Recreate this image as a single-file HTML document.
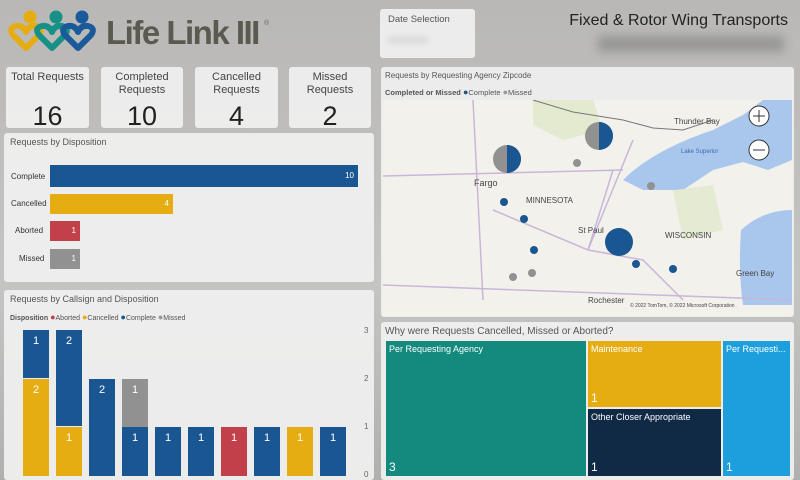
<!DOCTYPE html><html><head><style>
*{margin:0;padding:0;box-sizing:border-box}
body{width:800px;height:480px;overflow:hidden;background:linear-gradient(#b9b8b6,#c4c4c2 60%,#b0b0ae);font-family:"Liberation Sans",sans-serif;position:relative}
.a{position:absolute}
.p{position:absolute;background:rgba(240,240,240,.93);border-radius:3px}
.k{text-align:center;color:#444;font-size:11px;line-height:13px;padding-top:4px}
.k b{font-weight:normal;display:block;font-size:27px;color:#222;position:absolute;left:0;right:0;bottom:5px}
.t{font-size:9px;color:#555}
.bar{position:absolute;color:#fff;font-size:11px;text-align:center}
.lbl{position:absolute;font-size:8px;color:#333}
.tile{position:absolute;color:#fff;font-size:9px;padding:3px}
.tile b{position:absolute;left:3px;bottom:2px;font-size:12px;font-weight:normal}
</style></head><body>
<svg class="a" style="left:6px;top:8px" width="96" height="46" viewBox="0 0 96 46">
<g fill="none" stroke-width="6" stroke-linejoin="round">
<path d="M20 40 L7 27 Q2 20 10 18 Q17 17 20 24 Q23 17 30 18 Q38 20 33 27 Z" stroke="#e6ad13"/>
<path d="M46 40 L33 27 Q28 20 36 18 Q43 17 46 24 Q49 17 56 18 Q64 20 59 27 Z" stroke="#179087"/>
<path d="M72 40 L59 27 Q54 20 62 18 Q69 17 72 24 Q75 17 82 18 Q90 20 85 27 Z" stroke="#1a5a9a"/>
</g>
<circle cx="24" cy="9" r="6.5" fill="#e6ad13"/><circle cx="50" cy="9" r="6.5" fill="#179087"/><circle cx="76" cy="9" r="6.5" fill="#1a5a9a"/>
</svg>
<div class="a" style="left:106px;top:14px;font-size:33px;font-weight:bold;color:#5a5a50;letter-spacing:-1.5px">Life Link III</div>
<div class="a" style="left:264px;top:20px;font-size:7px;color:#666">®</div>
<div class="p" style="left:380px;top:9px;width:95px;height:49px"><div class="t" style="padding:5px 8px;font-size:9.5px">Date Selection</div><div style="margin:6px 8px;height:8px;width:40px;background:#ddd;filter:blur(2px)"></div></div>
<div class="a" style="right:12px;top:12px;font-size:16px;color:#222">Fixed &amp; Rotor Wing Transports</div>
<div class="a" style="left:598px;top:36px;width:186px;height:16px;background:#8e8e8c;filter:blur(5px);opacity:.8"></div>
<div class="p k" style="left:6px;top:67px;width:83px;height:61px">Total Requests<b>16</b></div>
<div class="p k" style="left:101px;top:67px;width:82px;height:61px">Completed<br>Requests<b>10</b></div>
<div class="p k" style="left:195px;top:67px;width:83px;height:61px">Cancelled<br>Requests<b>4</b></div>
<div class="p k" style="left:289px;top:67px;width:82px;height:61px">Missed Requests<b>2</b></div>
<div class="p" style="left:4px;top:133px;width:370px;height:149px">
<div class="t" style="position:absolute;left:6px;top:4px">Requests by Disposition</div>
<div class="lbl" style="left:7px;top:39px">Complete</div><div class="bar" style="left:46px;top:32px;width:308px;height:22px;background:#1a5691;font-size:8px;text-align:right;padding:6px 4px 0">10</div>
<div class="lbl" style="left:7px;top:66px">Cancelled</div><div class="bar" style="left:46px;top:61px;width:123px;height:20px;background:#e6ad13;font-size:8px;text-align:right;padding:5px 4px 0">4</div>
<div class="lbl" style="left:11px;top:93px">Aborted</div><div class="bar" style="left:46px;top:88px;width:30px;height:20px;background:#c2404a;font-size:8px;text-align:right;padding:5px 4px 0">1</div>
<div class="lbl" style="left:15px;top:121px">Missed</div><div class="bar" style="left:46px;top:116px;width:30px;height:20px;background:#919191;font-size:8px;text-align:right;padding:5px 4px 0">1</div>
</div>
<div class="p" style="left:4px;top:290px;width:370px;height:190px">
<div class="t" style="position:absolute;left:6px;top:4px">Requests by Callsign and Disposition</div>
<div style="position:absolute;left:6px;top:22px;font-size:7px;color:#555"><b>Disposition</b> <span style="color:#c2404a;font-size:9px">●</span>Aborted <span style="color:#e6ad13;font-size:9px">●</span>Cancelled <span style="color:#1a5691;font-size:9px">●</span>Complete <span style="color:#999;font-size:9px">●</span>Missed</div>
<div class="lbl" style="left:360px;top:36px;color:#666">3</div><div class="lbl" style="left:360px;top:84px;color:#666">2</div><div class="lbl" style="left:360px;top:132px;color:#666">1</div><div class="lbl" style="left:360px;top:180px;color:#666">0</div>
</div>
<div class="bar" style="left:23px;top:330px;width:26px;height:48px;background:#1a5691;padding-top:5px">1</div>
<div class="bar" style="left:23px;top:379px;width:26px;height:97px;background:#e6ad13;padding-top:5px">2</div>
<div class="bar" style="left:56px;top:330px;width:26px;height:96px;background:#1a5691;padding-top:5px">2</div>
<div class="bar" style="left:56px;top:427px;width:26px;height:49px;background:#e6ad13;padding-top:5px">1</div>
<div class="bar" style="left:89px;top:379px;width:26px;height:97px;background:#1a5691;padding-top:5px">2</div>
<div class="bar" style="left:122px;top:379px;width:26px;height:48px;background:#919191;padding-top:5px">1</div>
<div class="bar" style="left:122px;top:427px;width:26px;height:49px;background:#1a5691;padding-top:5px">1</div>
<div class="bar" style="left:155px;top:427px;width:26px;height:49px;background:#1a5691;padding-top:5px">1</div>
<div class="bar" style="left:188px;top:427px;width:26px;height:49px;background:#1a5691;padding-top:5px">1</div>
<div class="bar" style="left:221px;top:427px;width:26px;height:49px;background:#c2404a;padding-top:5px">1</div>
<div class="bar" style="left:254px;top:427px;width:26px;height:49px;background:#1a5691;padding-top:5px">1</div>
<div class="bar" style="left:287px;top:427px;width:26px;height:49px;background:#e6ad13;padding-top:5px">1</div>
<div class="bar" style="left:320px;top:427px;width:26px;height:49px;background:#1a5691;padding-top:5px">1</div>
<div class="p" style="left:381px;top:67px;width:413px;height:250px">
<div class="t" style="position:absolute;left:4px;top:4px;font-size:8px">Requests by Requesting Agency Zipcode</div>
<div style="position:absolute;left:4px;top:20px;font-size:7.5px;color:#555"><b>Completed or Missed</b> <span style="color:#1a5691;font-size:9px">●</span>Complete <span style="color:#999;font-size:9px">●</span>Missed</div>
<svg style="position:absolute;left:2px;top:33px" width="409" height="216" viewBox="0 0 409 216">
<rect width="409" height="216" fill="#f2f1ec"/>
<path d="M240 80 Q270 50 330 30 L360 15 L380 0 L409 0 L409 60 L385 70 L360 62 L330 70 L300 90 L260 90 Z" fill="#a9c6ec"/>
<path d="M358 130 Q380 110 409 110 L409 205 L360 205 Q355 170 358 130Z" fill="#a9c6ec"/>
<path d="M150 0 L210 0 L220 30 L180 40 L150 25Z" fill="#dfe8c8" opacity=".8"/>
<path d="M290 90 L330 85 L340 130 L300 140Z" fill="#dfe8c8" opacity=".7"/>
<path d="M0 76 L240 70 M90 0 L100 200 M110 110 L205 150 L260 160 L300 200 M205 150 L230 70 M205 150 L250 40 M0 185 L409 200" stroke="#c9b6d8" stroke-width="1.5" fill="none"/>
<path d="M150 0 L190 12 L240 20 L270 28 L300 30 L330 20" stroke="#777" fill="none"/>
<text x="91" y="86" font-size="9" fill="#444">Fargo</text>
<text x="143" y="103" font-size="8" fill="#444">MINNESOTA</text>
<text x="195" y="133" font-size="8" fill="#444">St Paul</text>
<text x="282" y="138" font-size="8" fill="#444">WISCONSIN</text>
<text x="291" y="24" font-size="8" fill="#444">Thunder Bay</text>
<text x="298" y="53" font-size="6" fill="#3a6ab4">Lake Superior</text>
<text x="353" y="176" font-size="8" fill="#444">Green Bay</text>
<text x="205" y="203" font-size="8" fill="#444">Rochester</text>
<text x="247" y="207" font-size="5" fill="#444">© 2022 TomTom, © 2022 Microsoft Corporation</text>
<circle cx="124" cy="59" r="14" fill="#919191"/><path d="M124 45 A14 14 0 0 1 124 73Z" fill="#1a5691"/>
<circle cx="216" cy="36" r="14" fill="#919191"/><path d="M216 22 A14 14 0 0 1 216 50Z" fill="#1a5691"/>
<circle cx="194" cy="63" r="4" fill="#919191"/><circle cx="268" cy="86" r="4" fill="#919191"/>
<circle cx="121" cy="102" r="4" fill="#1a5691"/><circle cx="141" cy="119" r="4" fill="#1a5691"/><circle cx="151" cy="150" r="4" fill="#1a5691"/>
<circle cx="236" cy="142" r="14" fill="#1a5691"/><circle cx="237" cy="133" r="4" fill="#1a5691"/>
<circle cx="253" cy="164" r="4" fill="#1a5691"/><circle cx="290" cy="169" r="4" fill="#1a5691"/>
<circle cx="130" cy="177" r="4" fill="#919191"/><circle cx="149" cy="173" r="4" fill="#919191"/>
<circle cx="376" cy="16" r="10" fill="#fff" stroke="#333"/><path d="M370 16h12M376 10v12" stroke="#333"/>
<circle cx="376" cy="50" r="10" fill="#fff" stroke="#333"/><path d="M370 50h12" stroke="#333"/>
</svg></div>
<div class="p" style="left:381px;top:322px;width:413px;height:158px">
<div class="t" style="position:absolute;left:4px;top:4px;font-size:10px">Why were Requests Cancelled, Missed or Aborted?</div></div>
<div class="tile" style="left:386px;top:341px;width:200px;height:135px;background:#14897e">Per Requesting Agency<b>3</b></div>
<div class="tile" style="left:588px;top:341px;width:133px;height:66px;background:#e6ad13">Maintenance<b>1</b></div>
<div class="tile" style="left:588px;top:409px;width:133px;height:67px;background:#102945">Other Closer Appropriate<b>1</b></div>
<div class="tile" style="left:723px;top:341px;width:67px;height:135px;background:#1d9fde;white-space:nowrap;overflow:hidden">Per Requesti...<b>1</b></div>
</body></html>
